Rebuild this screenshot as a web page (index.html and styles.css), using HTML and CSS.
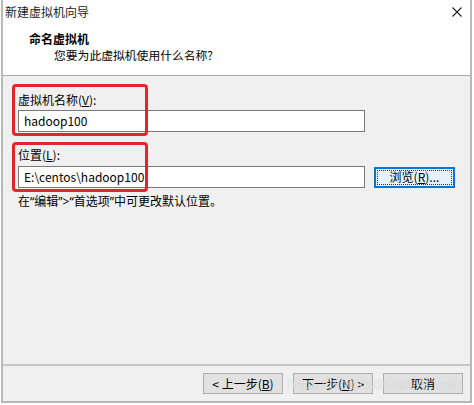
FILE: index.html
```html
<!DOCTYPE html>
<html lang="zh">
<head>
<meta charset="utf-8">
<title>新建虚拟机向导</title>
<link rel="stylesheet" href="styles.css">
</head>
<body>
<div class="window">
  <div class="header">
    <div class="titlebar">
      <span class="title">新建虚拟机向导</span>
      <svg class="close" width="10" height="10" viewBox="0 0 10 10"><path d="M0.5 0.5L9.5 9.5M9.5 0.5L0.5 9.5" stroke="#222" stroke-width="1.1" fill="none"/></svg>
    </div>
    <div class="heading">命名虚拟机</div>
    <div class="subtitle">您要为此虚拟机使用什么名称?</div>
  </div>
  <div class="body">
    <div class="label label-name">虚拟机名称(<u>V</u>):</div>
    <div class="row">
      <div class="input">hadoop100</div>
    </div>
    <div class="label label-loc">位置(<u>L</u>):</div>
    <div class="row row-loc">
      <div class="input">E:\centos\hadoop100</div>
      <div class="btn btn-browse"><span class="focus">浏览(<u>R</u>)...</span></div>
    </div>
    <div class="hint">在“编辑”&gt;“首选项”中可更改默认位置。</div>
  </div>
  <div class="footer">
    <div class="btn">&lt; 上一步(<u>B</u>)</div>
    <div class="btn">下一步(<u>N</u>) &gt;</div>
    <div class="btn">取消</div>
  </div>
  <div class="mark mark-name"></div>
  <div class="mark mark-loc"></div>
  <div class="watermark">https://blog.csdn.net/Ai_egin</div>
</div>
</body>
</html>
```
FILE: styles.css
```css
html, body {
  margin: 0;
  padding: 0;
  background: #ffffff;
}
body {
  font-family: "Noto Sans CJK SC", "Noto Sans", sans-serif;
  font-size: 12px;
  color: #000;
}
.window {
  position: relative;
  margin-left: 1px;
  width: 467px;
  height: 401px;
  border-left: 2px solid #b9b9b9;
  border-right: 2px solid #b9b9b9;
  border-bottom: 2px solid #b9b9b9;
  background: #f0f0f0;
  display: flex;
  flex-direction: column;
}
.header {
  background: #fff;
  height: 75px;
  border-bottom: 1px solid #a8a8a8;
}
.titlebar {
  height: 24px;
  display: flex;
  align-items: center;
  justify-content: space-between;
  padding: 0 8px 0 2px;
}
.title {
  color: #222;
  line-height: 16px;
}
.close {
  display: block;
}
.heading {
  margin-top: 7px;
  padding-left: 26px;
  line-height: 16px;
  font-weight: bold;
}
.subtitle {
  padding-left: 51px;
  line-height: 16px;
  font-size: 11.8px;
}
.body {
  height: 288px;
  padding: 16px 0 0 15px;
  box-sizing: border-box;
}
.label {
  line-height: 16px;
}
.label-loc {
  margin-top: 15px;
}
.row {
  margin-top: 2px;
  display: flex;
  align-items: center;
  gap: 9px;
}
.row-loc {
  margin-top: 3px;
}
.input {
  width: 347px;
  height: 22px;
  box-sizing: border-box;
  border: 1px solid #7a7a7a;
  background: #fff;
  padding-left: 5px;
  line-height: 20px;
}
.btn {
  width: 80px;
  height: 21px;
  box-sizing: border-box;
  border: 1px solid #adadad;
  background: #e1e1e1;
  display: flex;
  align-items: center;
  justify-content: center;
  line-height: 16px;
}
.btn-browse {
  width: 81px;
  border: 2px solid #0078d7;
  background: #e5f1fb;
  padding: 1px;
}
.focus {
  flex: 1;
  align-self: stretch;
  display: flex;
  align-items: center;
  justify-content: center;
  outline: 1px dotted #333;
  outline-offset: -1px;
}
.hint {
  margin-top: 6px;
  line-height: 16px;
  font-family: "Noto Sans", "Noto Sans CJK SC", sans-serif;
}
.footer {
  border-top: 2px solid #c6c6c6;
  flex: 1;
  display: flex;
  justify-content: flex-end;
  gap: 10px;
  padding: 7px 7px 0 0;
}
.mark {
  position: absolute;
  left: 9px;
  width: 136px;
  box-sizing: border-box;
  border: 3px solid #e8232a;
  border-radius: 4px;
}
.mark-name {
  top: 84px;
  height: 52px;
}
.mark-loc {
  top: 142px;
  height: 50px;
}
.watermark {
  position: absolute;
  left: 284px;
  top: 376px;
  font-family: "Liberation Sans", sans-serif;
  font-size: 14px;
  color: rgba(255, 255, 255, 0.55);
  text-shadow: 0 0 1px rgba(120, 120, 120, 0.35);
  white-space: nowrap;
}
```
